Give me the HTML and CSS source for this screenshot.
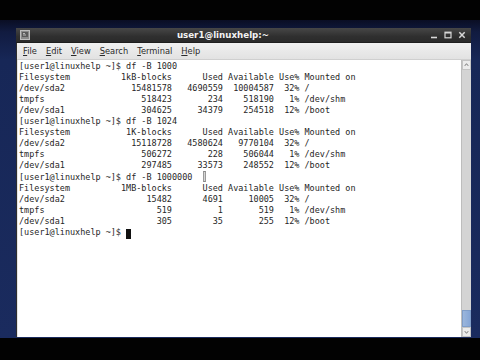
FILE: index.html
```html
<!DOCTYPE html>
<html>
<head>
<meta charset="utf-8">
<link rel="stylesheet" href="styles.css">
</head>
<body>
<div class="screen">
  <div class="letterbox top"></div>
  <div class="desktop">
    <div class="window">
      <div class="titlebar">
        <span class="app-icon">
          <svg width="10" height="10" viewBox="0 0 10 10"><rect x="0.5" y="0.5" width="9" height="9" fill="#8a8a8a" stroke="#bdbdbd"/><rect x="2" y="2" width="6" height="5" fill="#5a5a5a"/><path d="M3 3.5h2M3 5h3" stroke="#d0d0d0" stroke-width="0.8"/></svg>
        </span>
        <span class="title">user1@linuxhelp:~</span>
        <span class="controls">
          <svg width="8" height="8" viewBox="0 0 8 8"><path d="M1 6.5h6" stroke="#d8d8d8" stroke-width="1.6"/></svg>
          <svg width="8" height="8" viewBox="0 0 8 8"><rect x="1" y="1.2" width="6" height="5.6" fill="none" stroke="#d8d8d8" stroke-width="1.2"/><path d="M1 1.8h6" stroke="#d8d8d8" stroke-width="1.4"/></svg>
          <svg width="8" height="8" viewBox="0 0 8 8"><path d="M1.3 1.3l5.4 5.4M6.7 1.3l-5.4 5.4" stroke="#d8d8d8" stroke-width="1.5"/></svg>
        </span>
      </div>
      <div class="menubar">
        <span class="menu-item"><u>F</u>ile</span>
        <span class="menu-item"><u>E</u>dit</span>
        <span class="menu-item"><u>V</u>iew</span>
        <span class="menu-item"><u>S</u>earch</span>
        <span class="menu-item"><u>T</u>erminal</span>
        <span class="menu-item"><u>H</u>elp</span>
      </div>
      <div class="body">
<pre class="term">[user1@linuxhelp ~]$ df -B 1000
Filesystem          1kB-blocks      Used Available Use% Mounted on
/dev/sda2             15481578   4690559  10004587  32% /
tmpfs                   518423       234    518190   1% /dev/shm
/dev/sda1               304625     34379    254518  12% /boot
[user1@linuxhelp ~]$ df -B 1024
Filesystem           1K-blocks      Used Available Use% Mounted on
/dev/sda2             15118728   4580624   9770104  32% /
tmpfs                   506272       228    506044   1% /dev/shm
/dev/sda1               297485     33573    248552  12% /boot
[user1@linuxhelp ~]$ df -B 1000000  <span class="ibeam"></span>
Filesystem          1MB-blocks      Used Available Use% Mounted on
/dev/sda2                15482      4691     10005  32% /
tmpfs                      519         1       519   1% /dev/shm
/dev/sda1                  305        35       255  12% /boot
[user1@linuxhelp ~]$ <span class="cursor"> </span></pre>
        <div class="scrollbar">
          <div class="arrow">
            <svg width="8" height="8" viewBox="0 0 8 8"><path d="M2 5l2-2.5 2 2.5" fill="none" stroke="#6a6a6a" stroke-width="1"/></svg>
          </div>
          <div class="track"><div class="thumb"></div></div>
          <div class="arrow">
            <svg width="8" height="8" viewBox="0 0 8 8"><path d="M2 3l2 2.5 2-2.5" fill="none" stroke="#6a6a6a" stroke-width="1"/></svg>
          </div>
        </div>
      </div>
    </div>
  </div>
  <div class="letterbox bottom"></div>
</div>
</body>
</html>
```
FILE: styles.css
```css
* { box-sizing: border-box; }
html, body { margin: 0; padding: 0; background: #000; }
.screen {
  width: 480px;
  height: 360px;
  display: flex;
  flex-direction: column;
  overflow: hidden;
}
.letterbox { background: #020202; }
.letterbox.top { height: 20px; }
.letterbox.bottom { height: 22px; }
.desktop {
  height: 318px;
  padding: 8px 9px 0 16px;
  background: linear-gradient(to bottom, #0a0e24 0px, #111b40 12px, #172757 40px, #1a2b5e 100%);
}
.window {
  width: 455px;
  height: 309px;
  display: flex;
  flex-direction: column;
  background: #2e2e2e;
}
.titlebar {
  height: 15px;
  display: flex;
  align-items: center;
  padding: 0 5px 0 4px;
  background: linear-gradient(to bottom, #474747, #2f2f2f 60%, #2a2a2a);
  border-bottom: 1px solid #1e1e1e;
}
.app-icon { width: 10px; height: 10px; display: flex; }
.title {
  flex: 1;
  text-align: center;
  padding-right: 14px;
  color: #f2f2f2;
  font-family: "DejaVu Sans", sans-serif;
  font-weight: bold;
  font-size: 8.7px;
  line-height: 12px;
}
.controls { display: flex; gap: 6px; align-items: center; }
.controls svg { display: block; }
.menubar {
  height: 17px;
  display: flex;
  align-items: center;
  gap: 9px;
  padding: 0 0 0 6px;
  margin-left: 1px;
  background: linear-gradient(to bottom, #f0f0f0, #e2e2e2);
  border-bottom: 1px solid #cfcfcf;
  font-family: "DejaVu Sans", sans-serif;
  font-size: 8.3px;
  color: #2a2a2a;
}
.menu-item u { text-decoration: underline; text-underline-offset: 1px; }
.body {
  flex: 1;
  display: flex;
  margin-left: 1px;
  background: #fff;
  border-left: 1px solid #e4e4e4;
}
.term {
  flex: 1;
  margin: 0;
  padding: 1px 0 0 1px;
  font-family: "DejaVu Sans Mono", monospace;
  font-size: 8.47px;
  line-height: 11px;
  color: #262626;
  overflow: hidden;
}
.cursor {
  display: inline-block;
  width: 5px;
  height: 10px;
  background: #111;
  vertical-align: -2px;
}
.ibeam {
  display: inline-block;
  width: 3px;
  height: 11px;
  border-left: 1px solid #9a9a9a;
  border-right: 1px solid #9a9a9a;
  border-top: 1px solid #8a8a8a;
  border-bottom: 1px solid #8a8a8a;
  vertical-align: -2px;
  background: #d6d6d6;
}
.scrollbar {
  width: 10px;
  display: flex;
  flex-direction: column;
  background: #d9d9d9;
  border-left: 1px solid #bdbdbd;
}
.arrow {
  height: 10px;
  display: flex;
  align-items: center;
  justify-content: center;
  background: #ececec;
  border: 1px solid #c4c4c4;
}
.track {
  flex: 1;
  display: flex;
  flex-direction: column;
  justify-content: flex-end;
  background: #d4d4d4;
}
.thumb {
  height: 17px;
  background: linear-gradient(to right, #9bb6dc, #86a6d6);
  border: 1px solid #7f9dc8;
}
```
